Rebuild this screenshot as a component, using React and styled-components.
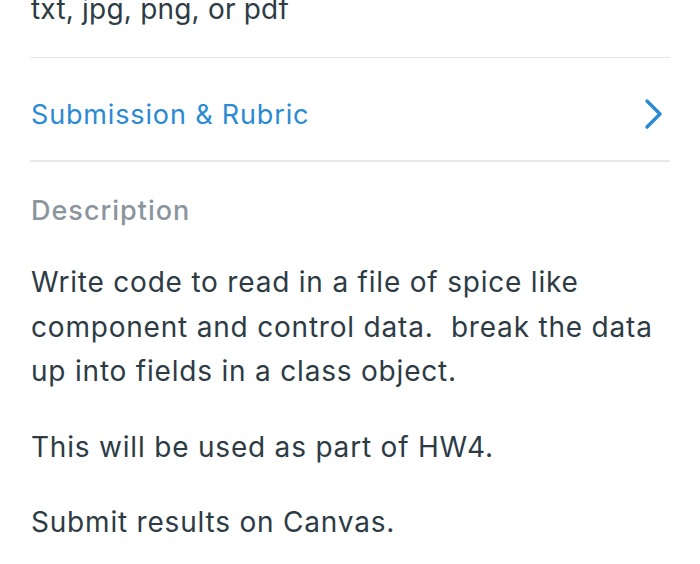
import React from 'react'
import styled, { createGlobalStyle } from 'styled-components'

const Global = createGlobalStyle`
	html, body {
		margin: 0;
		padding: 0;
		background: #ffffff;
	}
	body {
		font-family: Inter, Roboto, 'Liberation Sans', sans-serif;
		color: #2d3b45;
		overflow: hidden;
	}
`

const Page = styled.div`
	width: 700px;
	height: 564px;
	padding: 0 30px;
	box-sizing: border-box;
	overflow: hidden;
`

const FileTypes = styled.div`
	font-size: 28px;
	line-height: 44px;
	letter-spacing: 0.2px;
	margin-top: -13px;
	padding-bottom: 26px;
	border-bottom: 1px solid #e3e5e7;
	padding-left: 1px;
`

const LinkRow = styled.div`
	height: 104px;
	display: flex;
	align-items: center;
	justify-content: space-between;
	border-bottom: 2px solid #e6e8ea;
	padding: 10px 6px 0 1px;
	box-sizing: border-box;
`

const LinkText = styled.span`
	font-size: 27px;
	letter-spacing: 0.85px;
	color: #2a8ad3;
`

const Chevron = () => (
	<svg width='20' height='32' viewBox='0 0 20 32'>
		<path d='M3 3 L16 16 L3 29' fill='none' stroke='#2a8ad3' strokeWidth='3.4' strokeLinecap='round' strokeLinejoin='round' />
	</svg>
)

const SectionTitle = styled.div`
	font-size: 27px;
	letter-spacing: 1px;
	color: #8b959d;
	font-weight: 500;
	margin-top: 32px;
	padding-left: 1px;
`

const Body = styled.div`
	margin-top: 33px;
	padding-left: 1px;
`

const Para = styled.p`
	font-size: 28px;
	line-height: 44.5px;
	letter-spacing: 0.8px;
	margin: 0 0 31px;
`

const App = () => (
	<>
		<Global />
		<Page>
			<FileTypes>txt, jpg, png, or pdf</FileTypes>
			<LinkRow>
				<LinkText>Submission &amp; Rubric</LinkText>
				<Chevron />
			</LinkRow>
			<SectionTitle>Description</SectionTitle>
			<Body>
				<Para>
					Write code to read in a file of spice like
					<br />
					component and control data.&nbsp; break the data
					<br />
					up into fields in a class object.
				</Para>
				<Para>This will be used as part of HW4.</Para>
				<Para>Submit results on Canvas.</Para>
			</Body>
		</Page>
	</>
)

export default App
